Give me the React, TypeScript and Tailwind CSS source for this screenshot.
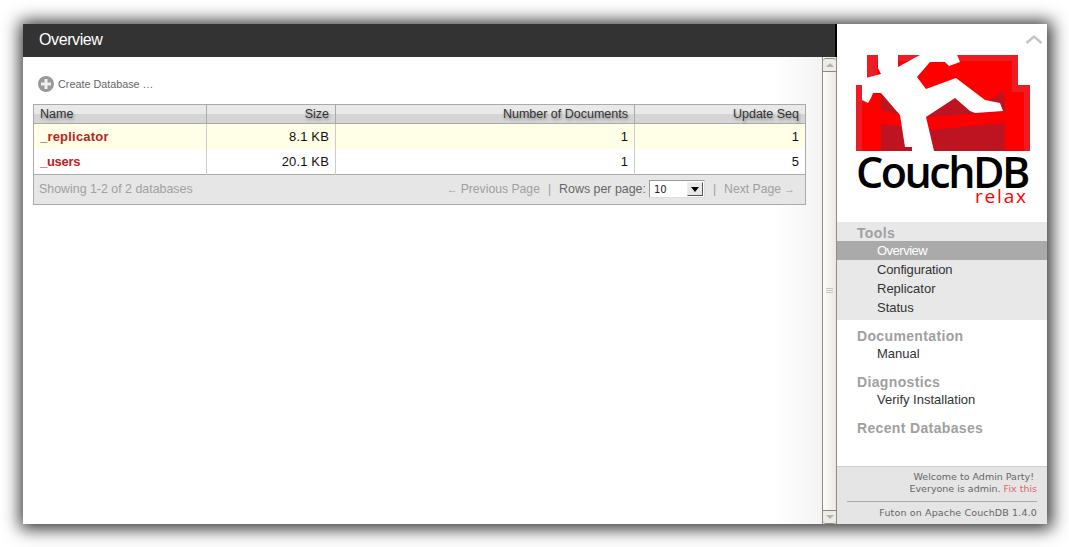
const sans = { fontFamily: '"Liberation Sans", Arial, sans-serif' };

const CouchLogo = () => (
  <svg width="185" height="160" viewBox="0 0 185 160" className="block">
    <path d="M6 35H17V5H168V35H180V101H6Z" fill="#ed1c24" />
    <path d="M12 52L27 40V11H162V42H174V101H12Z" fill="#ff0000" />
    <path d="M31 74L80 80L155 73V101H31Z" fill="#be1320" />
    <path d="M31 43L50 65L31 60Z" fill="#be1320" />
    <path d="M77 67L105 48L122 62L154 41L155 62Z" fill="#be1320" />
    <path
      d="M28 5H48V17L70 5H107L110 12L99 16L95 12L80 12L67 27L76 39L106 28L135 50L150 53L153 61L125 63L120 61L105 48L76 67L84 101H62L62 97L55 97L50 65L31 43L23 43L21 48L18 53L12 50V29L31 24L28 18Z"
      fill="#fff"
    />
    <text x="6" y="138" fill="#000" fontSize="43" fontWeight="600" style={{ fontFamily: '"Open Sans", sans-serif', letterSpacing: '-2.5px' }}>
      CouchDB
    </text>
    <text x="125" y="153" fill="#f00" fontSize="19" style={{ fontFamily: '"Open Sans", sans-serif', letterSpacing: '1.8px' }}>
      relax
    </text>
  </svg>
);

const Scrollbar = () => (
  <div className="w-[15px] shrink-0 flex flex-col border-x border-[#8f8b80] bg-[linear-gradient(to_right,#fdfcf9,#ece9e2)]">
    <div className="h-[14px] mt-[1px] rounded-t-[3px] border-y border-[#8f8b80] bg-[#eeece7] flex items-center justify-center">
      <div className="w-0 h-0 border-x-[4px] border-x-transparent border-b-[4px] border-b-[#b5b3ac]" />
    </div>
    <div className="flex-1 flex flex-col items-center justify-center gap-[1px] pb-[2px]">
      <div className="w-[7px] h-px bg-[#c9c6be]" />
      <div className="w-[7px] h-px bg-[#c9c6be]" />
      <div className="w-[7px] h-px bg-[#c9c6be]" />
    </div>
    <div className="h-[14px] rounded-b-[3px] border-y border-[#8f8b80] bg-[#eeece7] flex items-center justify-center">
      <div className="w-0 h-0 border-x-[4px] border-x-transparent border-t-[4px] border-t-[#b5b3ac]" />
    </div>
  </div>
);

const headers = [
  { label: 'Name', w: 'w-[173px]', align: 'text-left' },
  { label: 'Size', w: 'w-[129px]', align: 'text-right' },
  { label: 'Number of Documents', w: 'w-[299px]', align: 'text-right' },
  { label: 'Update Seq', w: '', align: 'text-right' },
];

const rows = [
  { name: '_replicator', size: '8.1 KB', docs: '1', seq: '1', rowClass: 'h-[25px] bg-[#ffffe8]', nameClass: 'tracking-[0.2px]' },
  { name: '_users', size: '20.1 KB', docs: '1', seq: '5', rowClass: 'h-[26px] bg-white', nameClass: 'tracking-[-0.3px]' },
];

const DatabaseTable = () => (
  <table className="w-[773px] border-collapse table-fixed border border-[#aaa] text-[13px]">
    <thead>
      <tr className="h-[19px] bg-[linear-gradient(to_bottom,#e9e9e9_50%,#d5d5d5_50%)] border-b border-[#aaa]">
        {headers.map((h) => (
          <th
            key={h.label}
            className={`${h.w} ${h.align} px-[6px] py-0 text-[12.5px] leading-[18px] font-normal text-[#333] border-r border-[#aaa] last:border-r-0 [text-shadow:1px_2px_3px_#888]`}
          >
            {h.label}
          </th>
        ))}
      </tr>
    </thead>
    <tbody>
      {rows.map((r) => (
        <tr key={r.name} className={r.rowClass}>
          <td className={`px-[6px] font-bold text-[#bb2222] border-r border-[#ccc] ${r.nameClass}`}>{r.name}</td>
          <td className="px-[6px] text-right text-[#111] border-r border-[#ccc] tracking-[0.15px]">{r.size}</td>
          <td className="px-[6px] text-right text-[#111] border-r border-[#ccc]">{r.docs}</td>
          <td className="px-[6px] text-right text-[#111]">{r.seq}</td>
        </tr>
      ))}
    </tbody>
    <tfoot>
      <tr className="h-[30px] bg-[#e6e6e6] border-t border-[#aaa]">
        <td colSpan={4} className="pl-[5px] pr-[10px]">
          <div className="flex items-center text-[#a0a0a0] text-[12.2px]">
            <span className="flex-1 text-[12.4px]">Showing 1-2 of 2 databases</span>
            <span className="text-[11px] mr-[3px]">←</span>
            <span>Previous Page</span>
            <span className="mx-[8px]">|</span>
            <span className="text-[#666] text-[12.4px]">Rows per page:</span>
            <div className="ml-[3px] w-[56px] h-[18px] bg-white border border-[#ddd] border-t-[#999] border-l-[#999] flex items-center pl-[4px] pr-[1px] text-[10px] text-[#222]" style={{ fontFamily: '"DejaVu Sans", sans-serif' }}>
              <span className="flex-1">10</span>
              <div className="w-[16px] h-[14px] bg-[#e8e8e8] border border-[#eee] border-r-[#555] border-b-[#555] flex items-center justify-center">
                <div className="w-0 h-0 border-x-[4px] border-x-transparent border-t-[5px] border-t-black" />
              </div>
            </div>
            <span className="mx-[8px]">|</span>
            <span>Next Page</span>
            <span className="text-[11px] ml-[3px]">→</span>
          </div>
        </td>
      </tr>
    </tfoot>
  </table>
);

const NavTitle = ({ children }: { children: string }) => (
  <h3 className="pl-[20px] text-[14px] leading-[16px] font-bold text-[#a0a0a0] tracking-[0.35px]">{children}</h3>
);

const NavItem = ({ children, className = 'text-[#333]' }: { children: string; className?: string }) => (
  <div className={`pl-[40px] h-[19px] text-[13px] leading-[19px] ${className}`}>{children}</div>
);

const Sidebar = () => (
  <aside className="w-[210px] shrink-0 flex flex-col bg-white">
    <div className="h-[198px] relative pl-[13px] pt-[26px]">
      <svg className="absolute top-[10px] right-[4px]" width="18" height="11" viewBox="0 0 18 11">
        <path d="M1.5 9L9 2.5L16.5 9" fill="none" stroke="#c4c4c4" strokeWidth="2.4" />
      </svg>
      <CouchLogo />
    </div>
    <div className="bg-[#e8e8e8] h-[98px] pt-[3px]">
      <NavTitle>Tools</NavTitle>
      <NavItem className="bg-[#aaaaaa] text-white tracking-[-0.5px]">Overview</NavItem>
      <NavItem className="text-[#333] tracking-[-0.15px]">Configuration</NavItem>
      <NavItem>Replicator</NavItem>
      <NavItem>Status</NavItem>
    </div>
    <div className="flex-1 pt-[8px]">
      <NavTitle>Documentation</NavTitle>
      <NavItem>Manual</NavItem>
      <div className="h-[11px]" />
      <NavTitle>Diagnostics</NavTitle>
      <NavItem>Verify Installation</NavItem>
      <div className="h-[11px]" />
      <NavTitle>Recent Databases</NavTitle>
    </div>
    <div className="h-[58px] bg-[#e5e5e5] border-t border-[#ccc] px-[10px] pt-[4px] text-right text-[9.5px] leading-[12px] text-[#666]" style={{ fontFamily: '"DejaVu Sans", sans-serif' }}>
      <div className="pr-[3px]">Welcome to Admin Party!</div>
      <div>
        Everyone is admin. <span className="text-[#e06666]">Fix this</span>
      </div>
      <div className="mt-[6px] pt-[5px] border-t border-[#aaa] tracking-[0.14px]">Futon on Apache CouchDB 1.4.0</div>
    </div>
  </aside>
);

export default function App() {
  return (
    <div className="w-[1069px] h-[547px] bg-white pl-[23px] pt-[24px] overflow-hidden" style={sans}>
      <div className="w-[1024px] h-[500px] flex shadow-[1px_1px_16px_4px_rgba(0,0,0,0.8)] bg-white">
        <main className="flex-1 flex flex-col min-w-0">
          <header className="h-[33px] shrink-0 bg-[#333] border-r-2 border-black pl-[16px] text-white text-[16px] tracking-[-0.4px] leading-[31px]">
            Overview
          </header>
          <div className="flex-1 flex min-h-0">
            <div className="flex-1 pl-[10px] pt-[19px] bg-[linear-gradient(to_right,#fff_calc(100%-50px),#f4f4f4)]">
              <div className="flex items-center gap-[4px] pl-[5px] h-[16px] mb-[12px] text-[10.8px] text-[#666]">
                <span className="w-[16px] h-[16px] rounded-full bg-[#999] flex items-center justify-center">
                  <svg width="10" height="10" viewBox="0 0 10 10">
                    <path d="M5 0V10M0 5H10" stroke="#eee" strokeWidth="3" />
                  </svg>
                </span>
                Create Database …
              </div>
              <DatabaseTable />
            </div>
            <Scrollbar />
          </div>
        </main>
        <Sidebar />
      </div>
    </div>
  );
}
